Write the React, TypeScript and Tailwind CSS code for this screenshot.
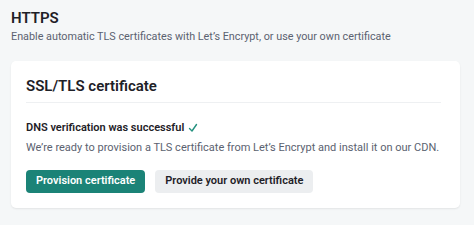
export default function App() {
  return (
    <div
      className="h-[225px] w-[474px] overflow-hidden bg-[#f5f7f8] px-[11px] pt-[9px] text-[#1e2127]"
      style={{ fontFamily: "Roboto, 'Noto Sans', sans-serif" }}
    >
      <h1 className="text-[15px] font-semibold leading-[18px]">HTTPS</h1>
      <p className="mt-[3px] text-[10.8px] leading-[14px] text-[#5b6270]">
        Enable automatic TLS certificates with Let’s Encrypt, or use your own certificate
      </p>

      <div className="mt-[17px] w-[449px] rounded-[5px] bg-white pb-[15px] pl-[15px] pr-[15px] pt-[15px] shadow-[0_1px_2px_rgba(0,0,0,0.08)]">
        <h2 className="mr-[4px] border-b border-[#eef0f2] pb-[6px] text-[15px] font-semibold leading-[20px]">
          SSL/TLS certificate
        </h2>

        <p className="mt-[18px] flex items-center gap-[4px] text-[11px] font-semibold leading-[14px]">
          DNS verification was successful
          <svg width="10" height="10" viewBox="0 0 10 10" fill="none" className="text-[#24917f]">
            <path d="M1.5 5.5 L4 8 L8.5 1.5" stroke="currentColor" strokeWidth="1.4" strokeLinecap="round" strokeLinejoin="round" />
          </svg>
        </p>
        <p className="mt-[6px] text-[11px] leading-[14px] text-[#5b6270]">
          We’re ready to provision a TLS certificate from Let’s Encrypt and install it on our CDN.
        </p>

        <div className="mt-[15px] flex gap-[10px]">
          <button className="h-[23px] rounded-[4px] bg-[#1b8377] px-[10px] text-[11px] font-semibold text-white">
            Provision certificate
          </button>
          <button className="h-[23px] rounded-[4px] bg-[#eceef0] px-[10px] text-[11px] font-semibold text-[#1e2127]">
            Provide your own certificate
          </button>
        </div>
      </div>
    </div>
  );
}
